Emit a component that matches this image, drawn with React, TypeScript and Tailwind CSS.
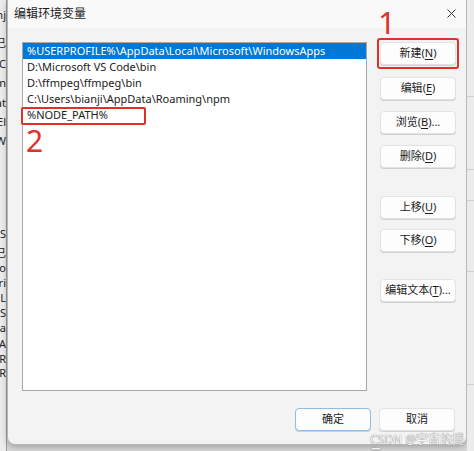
import React from "react";

const font = { fontFamily: '"Noto Sans", "Noto Sans CJK SC", sans-serif' };

const paths = [
  "%USERPROFILE%\\AppData\\Local\\Microsoft\\WindowsApps",
  "D:\\Microsoft VS Code\\bin",
  "D:\\ffmpeg\\ffmpeg\\bin",
  "C:\\Users\\bianji\\AppData\\Roaming\\npm",
  "%NODE_PATH%",
];

function Btn({
  label,
  mn,
  tail = "",
  className = "",
  primary = false,
}: {
  label: string;
  mn?: string;
  tail?: string;
  className?: string;
  primary?: boolean;
}) {
  return (
    <div
      className={`flex h-[23px] w-[76px] items-center justify-center rounded-[4px] border bg-[#fdfdfd] text-[11px] text-[#1b1b1b] shadow-[0_1px_0_#d0d0d0] ${
        primary ? "border-[#8fbde3]" : "border-[#e3e3e3]"
      } ${className}`}
    >
      {label}
      {mn && (
        <>
          (<span className="underline underline-offset-2">{mn}</span>)
        </>
      )}
      {tail}
    </div>
  );
}

const leftTop = [
  ["nj", 8],
  ["己", 14],
  ["C", 7],
  ["n", 5],
  ["at", 6],
  ["El", 5],
  ["W", 5],
] as const;

const leftBottom = [
  ["S", 79],
  ["已", 5],
  ["o", 1],
  ["ri", 1],
  ["L", 1],
  ["S", 1],
  ["a", 1],
  ["A", 2],
  ["R", 1],
  ["R", 0],
] as const;

export default function App() {
  return (
    <div
      className="flex h-[451px] w-[474px] overflow-hidden bg-[#d7d7d7]"
      style={font}
    >
      {/* window behind, left side */}
      <div className="flex h-full w-[7px] flex-col border-r border-[#9a9a9a] bg-[#ececec] text-[11px] leading-[14px] text-[#222]">
        {leftTop.map(([t, m], i) => (
          <div
            key={"t" + i}
            className="flex justify-end overflow-hidden whitespace-nowrap"
            style={{ marginTop: m }}
          >
            {t}
          </div>
        ))}
        {leftBottom.map(([t, m], i) => (
          <div
            key={"b" + i}
            className="flex justify-end overflow-hidden whitespace-nowrap"
            style={{ marginTop: m }}
          >
            {t}
          </div>
        ))}
      </div>

      {/* dialog */}
      <div className="flex h-[445px] w-[460px] shrink-0 flex-col rounded-b-[8px] border-x border-b border-[#b8b8b8] bg-[#f3f3f3] shadow-[0_2px_6px_rgba(0,0,0,0.25)]">
        <div className="flex h-[28px] items-center justify-between bg-[#f9f9f9] pl-[6px] pr-[10px]">
          <span className="text-[12px] text-[#1b1b1b]">编辑环境变量</span>
          <svg width="9" height="9" viewBox="0 0 9 9" className="mt-[-2px]">
            <path d="M0.5 0.5 L8.5 8.5 M8.5 0.5 L0.5 8.5" stroke="#333" strokeWidth="1" />
          </svg>
        </div>

        <div className="flex pl-[14px] pt-[14px]">
          {/* list */}
          <div className="relative h-[349px] w-[345px] border border-[#a8a8a8] bg-white text-[11px] leading-[16px] text-[#1b1b1b]">
            {paths.map((p, i) => (
              <div
                key={p}
                className={`h-[16px] whitespace-nowrap pl-[4px] ${
                  i === 0 ? "bg-[#0078d7] text-white" : ""
                }`}
              >
                {p}
              </div>
            ))}
            <div className="absolute left-[-2px] top-[64px] h-[18px] w-[125px] rounded-[2px] border-2 border-[#e0302a]" />
            <div className="absolute left-[3px] top-[83px] text-[30px] font-normal leading-[30px] text-[#e0302a]">
              2
            </div>
          </div>

          {/* buttons */}
          <div className="relative ml-[13px] flex flex-col">
            <div className="absolute left-[-2px] top-[-35px] text-[31px] font-normal leading-[31px] text-[#e0302a]">
              1
            </div>
            <div className="relative">
              <Btn label="新建" mn="N" />
              <div className="absolute -inset-x-[3px] -inset-y-[4px] rounded-[3px] border-2 border-[#e0302a]" />
            </div>
            <Btn label="编辑" mn="E" className="mt-[12px]" />
            <Btn label="浏览" mn="B" tail="..." className="mt-[11px]" />
            <Btn label="删除" mn="D" className="mt-[11px]" />
            <Btn label="上移" mn="U" className="mt-[28px]" />
            <Btn label="下移" mn="O" className="mt-[10px]" />
            <Btn label="编辑文本" mn="T" tail="..." className="mt-[27px]" />
          </div>
        </div>

        <div className="mt-[17px] flex justify-end gap-[8px] pr-[11px]">
          <Btn label="确定" primary />
          <Btn label="取消" />
        </div>
      </div>

      {/* window behind, right side */}
      <div className="flex h-full flex-1 flex-col bg-[#ececec]">
        <div className="mt-[96px] border-t border-[#cfcfcf]" />
        <div className="mt-[72px] border-t border-[#cfcfcf]" />
        <div className="mt-[30px] border-t border-[#cfcfcf]" />
        <div className="mt-[70px] border-t border-[#cfcfcf]" />
        <div className="mt-[112px] border-t border-[#cfcfcf]" />
      </div>

      {/* watermark */}
      <div className="pointer-events-none fixed left-[370px] top-[433px] text-[12px] leading-[14px] text-[#f4f4f4] [text-shadow:0_0_1px_#777,0_0_1px_#777]">
        CSDN @宇宙的提示
      </div>
    </div>
  );
}
